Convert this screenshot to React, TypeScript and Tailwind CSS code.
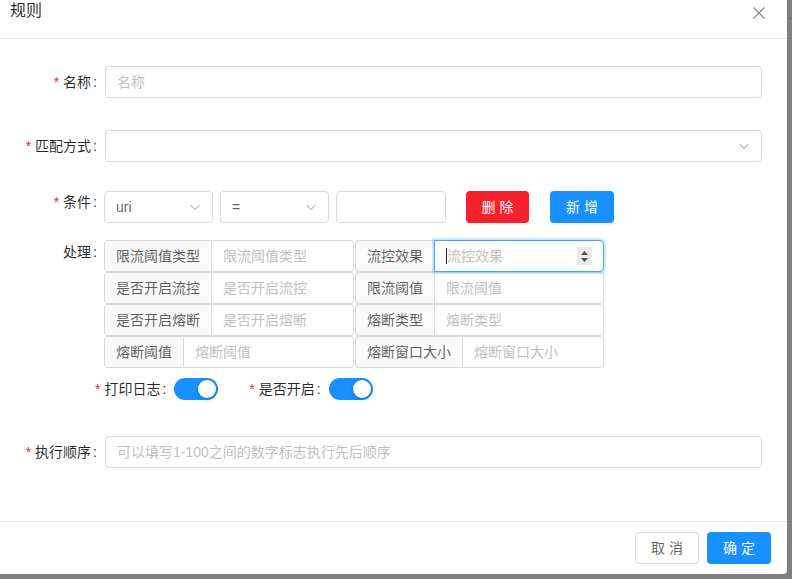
import React from "react";

const FONT = "font-['Liberation_Sans','Noto_Sans_CJK_SC',sans-serif]";

function Label({ text, req, w = "w-[97px]" }: { text: string; req?: boolean; w?: string }) {
  return (
    <div className={`${w} shrink-0 flex justify-end items-center h-[22px] text-[14px] leading-[22px] text-[rgba(0,0,0,0.85)] whitespace-nowrap`}>
      {req && <span className="text-[#f5222d] mr-[4px]">*</span>}
      <span>{text}</span>
      <span className="ml-[2px]">:</span>
    </div>
  );
}

function Chevron() {
  return (
    <svg width="12" height="12" viewBox="0 0 12 12" className="shrink-0">
      <path d="M1.5 4 L6 8.5 L10.5 4" fill="none" stroke="#bfbfbf" strokeWidth="1.1" />
    </svg>
  );
}

function Select({ value, className }: { value?: string; className: string }) {
  return (
    <div className={`${className} h-[32px] border border-[#d9d9d9] rounded-[4px] bg-white flex items-center justify-between pl-[11px] pr-[11px] text-[14px] leading-[22px] text-[rgba(0,0,0,0.65)]`}>
      <span>{value ?? ""}</span>
      <Chevron />
    </div>
  );
}

function Input({ placeholder, className }: { placeholder?: string; className: string }) {
  return (
    <div className={`${className} h-[32px] border border-[#d9d9d9] rounded-[4px] bg-white flex items-center px-[11px] text-[14px] leading-[22px] text-[#bfbfbf] whitespace-nowrap overflow-hidden`}>
      {placeholder ?? ""}
    </div>
  );
}

function Group({ addon, focused }: { addon: string; focused?: boolean }) {
  return (
    <div className="flex h-[32px] text-[14px] leading-[22px]">
      <div className="shrink-0 flex items-center px-[11px] bg-[#fafafa] border-y border-l border-[#d9d9d9] rounded-l-[4px] text-[rgba(0,0,0,0.65)] whitespace-nowrap">
        {addon}
      </div>
      {focused ? (
        <div className="flex-1 relative z-10 flex items-center justify-between pl-[11px] pr-[11px] border border-[#40a9ff] rounded-r-[4px] shadow-[0_0_0_2px_rgba(24,144,255,0.2)] bg-white">
          <div className="flex items-center">
            <span className="w-[1px] h-[16px] bg-[#222]" />
            <span className="text-[#bfbfbf] whitespace-nowrap">{addon}</span>
          </div>
          <div className="w-[15px] h-[18px] bg-[#ececec] flex flex-col items-center justify-center gap-[3px]">
            <svg width="7" height="4" viewBox="0 0 7 4"><path d="M0 4 L3.5 0 L7 4Z" fill="#505050" /></svg>
            <svg width="7" height="4" viewBox="0 0 7 4"><path d="M0 0 L3.5 4 L7 0Z" fill="#505050" /></svg>
          </div>
        </div>
      ) : (
        <div className="flex-1 flex items-center px-[11px] border border-[#d9d9d9] rounded-r-[4px] bg-white text-[#bfbfbf] whitespace-nowrap overflow-hidden">
          {addon}
        </div>
      )}
    </div>
  );
}

function Switch() {
  return (
    <div className="w-[44px] h-[22px] rounded-full bg-[#1890ff] flex items-center justify-end pr-[2px] shrink-0">
      <div className="w-[18px] h-[18px] rounded-full bg-white shadow-[0_2px_4px_0_rgba(0,35,11,0.2)]" />
    </div>
  );
}

export default function App() {
  return (
    <div className={`${FONT} w-[792px] h-[579px] bg-[#808080] flex overflow-hidden`}>
      <div className="w-[787px] h-[574px] bg-white rounded-br-[4px] flex flex-col shrink-0">
        {/* header */}
        <div className="h-[39px] shrink-0 border-b border-[#e8e8e8] flex justify-between pl-[10px] pr-[21px]">
          <div className="text-[16px] leading-[22px] text-[rgba(0,0,0,0.85)]">规则</div>
          <svg width="14" height="14" viewBox="0 0 14 14" className="mt-[6px]">
            <path d="M1.5 1.5 L12.5 12.5 M12.5 1.5 L1.5 12.5" stroke="#8c8c8c" strokeWidth="1.3" fill="none" />
          </svg>
        </div>

        {/* body */}
        <div className="flex-1 flex flex-col pt-[27px]">
          <div className="flex items-center h-[32px]">
            <Label text="名称" req />
            <Input placeholder="名称" className="ml-[8px] w-[657px]" />
          </div>

          <div className="flex items-center h-[32px] mt-[32px]">
            <Label text="匹配方式" req />
            <Select className="ml-[8px] w-[657px]" />
          </div>

          <div className="flex items-start h-[32px] mt-[29px]">
            <Label text="条件" req />
            <div className="ml-[7px] flex items-center">
              <Select value="uri" className="w-[109px]" />
              <Select value="=" className="w-[109px] ml-[7px]" />
              <Input className="w-[110px] ml-[7px]" />
              <div className="ml-[20px] w-[63px] h-[32px] rounded-[4px] bg-[#f5222d] text-white text-[14px] leading-[22px] flex items-center justify-center shadow-[0_2px_0_rgba(0,0,0,0.045)]">删 除</div>
              <div className="ml-[21px] w-[64px] h-[32px] rounded-[4px] bg-[#1890ff] text-white text-[14px] leading-[22px] flex items-center justify-center shadow-[0_2px_0_rgba(0,0,0,0.045)]">新 增</div>
            </div>
          </div>

          <div className="flex items-start mt-[17px]">
            <div className="mt-[1px]">
              <Label text="处理" />
            </div>
            <div className="ml-[7px] grid grid-cols-[250px_249px] gap-x-[1px]">
              <Group addon="限流阈值类型" />
              <Group addon="流控效果" focused />
              <Group addon="是否开启流控" />
              <Group addon="限流阈值" />
              <Group addon="是否开启熔断" />
              <Group addon="熔断类型" />
              <Group addon="熔断阈值" />
              <Group addon="熔断窗口大小" />
            </div>
          </div>

          <div className="flex items-center h-[22px] mt-[10px] pl-[95px] text-[14px] leading-[22px] text-[rgba(0,0,0,0.85)] whitespace-nowrap">
            <span className="text-[#f5222d] mr-[4px]">*</span>
            <span>打印日志</span>
            <span className="ml-[2px] mr-[8px]">:</span>
            <Switch />
            <span className="text-[#f5222d] mr-[4px] ml-[31px]">*</span>
            <span>是否开启</span>
            <span className="ml-[2px] mr-[8px]">:</span>
            <Switch />
          </div>

          <div className="flex items-center h-[32px] mt-[36px]">
            <Label text="执行顺序" req />
            <Input placeholder="可以填写1-100之间的数字标志执行先后顺序" className="ml-[8px] w-[657px]" />
          </div>
        </div>

        {/* footer */}
        <div className="shrink-0 border-t border-[#e8e8e8] pt-[10px] pb-[10px] pr-[16px] flex justify-end gap-[8px]">
          <div className="w-[64px] h-[32px] rounded-[4px] border border-[#d9d9d9] bg-white text-[rgba(0,0,0,0.65)] text-[14px] leading-[22px] flex items-center justify-center">取 消</div>
          <div className="w-[64px] h-[32px] rounded-[4px] bg-[#1890ff] text-white text-[14px] leading-[22px] flex items-center justify-center">确 定</div>
        </div>
      </div>
      <div className="flex-1 pt-[18px]">
        <div className="h-[1px] bg-[#6e6e6e]" />
      </div>
    </div>
  );
}
